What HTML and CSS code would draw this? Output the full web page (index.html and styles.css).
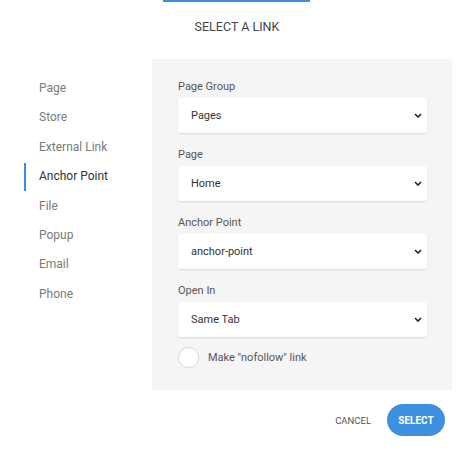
FILE: index.html
```html
<!DOCTYPE html>
<html lang="en">
<head>
    <meta charset="UTF-8">
    <meta name="viewport" content="width=device-width, initial-scale=1.0">
    <title>Select a link</title>
    <link rel="stylesheet" href="styles.css">
</head>
<body>
    <div class="dialog">
        <div class="top-bar"></div>
        <h1 class="title">SELECT A LINK</h1>
        <div class="dialog-body">
            <ul class="link-types">
                <li>Page</li>
                <li>Store</li>
                <li>External Link</li>
                <li class="active">Anchor Point</li>
                <li>File</li>
                <li>Popup</li>
                <li>Email</li>
                <li>Phone</li>
            </ul>
            <div class="panel">
                <label class="field-label">Page Group</label>
                <div class="select">
                    <span>Pages</span>
                    <svg viewBox="0 0 8 5" width="8" height="5"><path d="M1 1l3 3 3-3" fill="none" stroke="#222" stroke-width="1.6"/></svg>
                </div>
                <label class="field-label">Page</label>
                <div class="select">
                    <span>Home</span>
                    <svg viewBox="0 0 8 5" width="8" height="5"><path d="M1 1l3 3 3-3" fill="none" stroke="#222" stroke-width="1.6"/></svg>
                </div>
                <label class="field-label">Anchor Point</label>
                <div class="select">
                    <span>anchor-point</span>
                    <svg viewBox="0 0 8 5" width="8" height="5"><path d="M1 1l3 3 3-3" fill="none" stroke="#222" stroke-width="1.6"/></svg>
                </div>
                <label class="field-label">Open In</label>
                <div class="select">
                    <span>Same Tab</span>
                    <svg viewBox="0 0 8 5" width="8" height="5"><path d="M1 1l3 3 3-3" fill="none" stroke="#222" stroke-width="1.6"/></svg>
                </div>
                <div class="checkbox-row">
                    <span class="round-check"></span>
                    <span>Make "nofollow" link</span>
                </div>
            </div>
        </div>
        <div class="dialog-footer">
            <button class="btn-cancel">CANCEL</button>
            <button class="btn-select">SELECT</button>
        </div>
    </div>
</body>
</html>
```

FILE: styles.css
```css
body {
    font-family: Roboto, "Liberation Sans", Arial, sans-serif;
    margin: 0;
    padding: 0;
    background-color: #fff;
}
.dialog {
    width: 474px;
    height: 454px;
}
.top-bar {
    width: 147px;
    height: 2px;
    margin-left: 163px;
    background-color: #3d8fdc;
}
.title {
    margin: 0;
    padding-top: 16px;
    height: 41px;
    line-height: 18px;
    font-size: 12.5px;
    font-weight: normal;
    text-align: center;
    color: #444;
}
.dialog-body {
    display: flex;
}
.link-types {
    list-style-type: none;
    margin: 0;
    padding: 15px 0 0 0;
    width: 152px;
}
.link-types li {
    height: 29.4px;
    line-height: 29.4px;
    padding-left: 39px;
    font-size: 12px;
    color: #7a7a7a;
    position: relative;
}
.link-types li.active {
    color: #333;
}
.link-types li.active::before {
    content: '';
    position: absolute;
    left: 24px;
    top: 1px;
    width: 2px;
    height: 28px;
    background-color: #3d8fdc;
}
.panel {
    width: 300px;
    padding: 19px 25px 22px 26px;
    box-sizing: border-box;
    background-color: #f5f5f5;
    display: flex;
    flex-direction: column;
}
.field-label {
    display: block;
    margin-top: 13px;
    margin-bottom: 2px;
    line-height: 18px;
    font-size: 11px;
    color: #555;
}
.field-label:first-child {
    margin-top: 0;
}
.select {
    height: 35px;
    background-color: #fff;
    border-radius: 2px;
    box-shadow: 0 1px 2px rgba(0, 0, 0, 0.12);
    display: flex;
    align-items: center;
    justify-content: space-between;
    padding: 0 5px 0 13px;
    font-size: 11px;
    color: #333;
}
.checkbox-row {
    display: flex;
    align-items: center;
    margin-top: 10px;
    font-size: 11px;
    color: #555;
}
.round-check {
    width: 19px;
    height: 19px;
    border-radius: 50%;
    border: 1px solid #d6d6d6;
    background-color: #fff;
    margin-right: 9px;
}
.dialog-footer {
    display: flex;
    justify-content: flex-end;
    align-items: center;
    padding: 14px 29px 0 0;
}
.btn-cancel {
    background: none;
    border: none;
    padding: 0 16px;
    font-family: inherit;
    font-size: 9.5px;
    color: #555;
    cursor: pointer;
}
.btn-select {
    width: 58px;
    height: 32px;
    border: none;
    border-radius: 16px;
    background-color: #3d8fe0;
    color: #fff;
    font-family: inherit;
    font-size: 10px;
    font-weight: bold;
    cursor: pointer;
}
```
